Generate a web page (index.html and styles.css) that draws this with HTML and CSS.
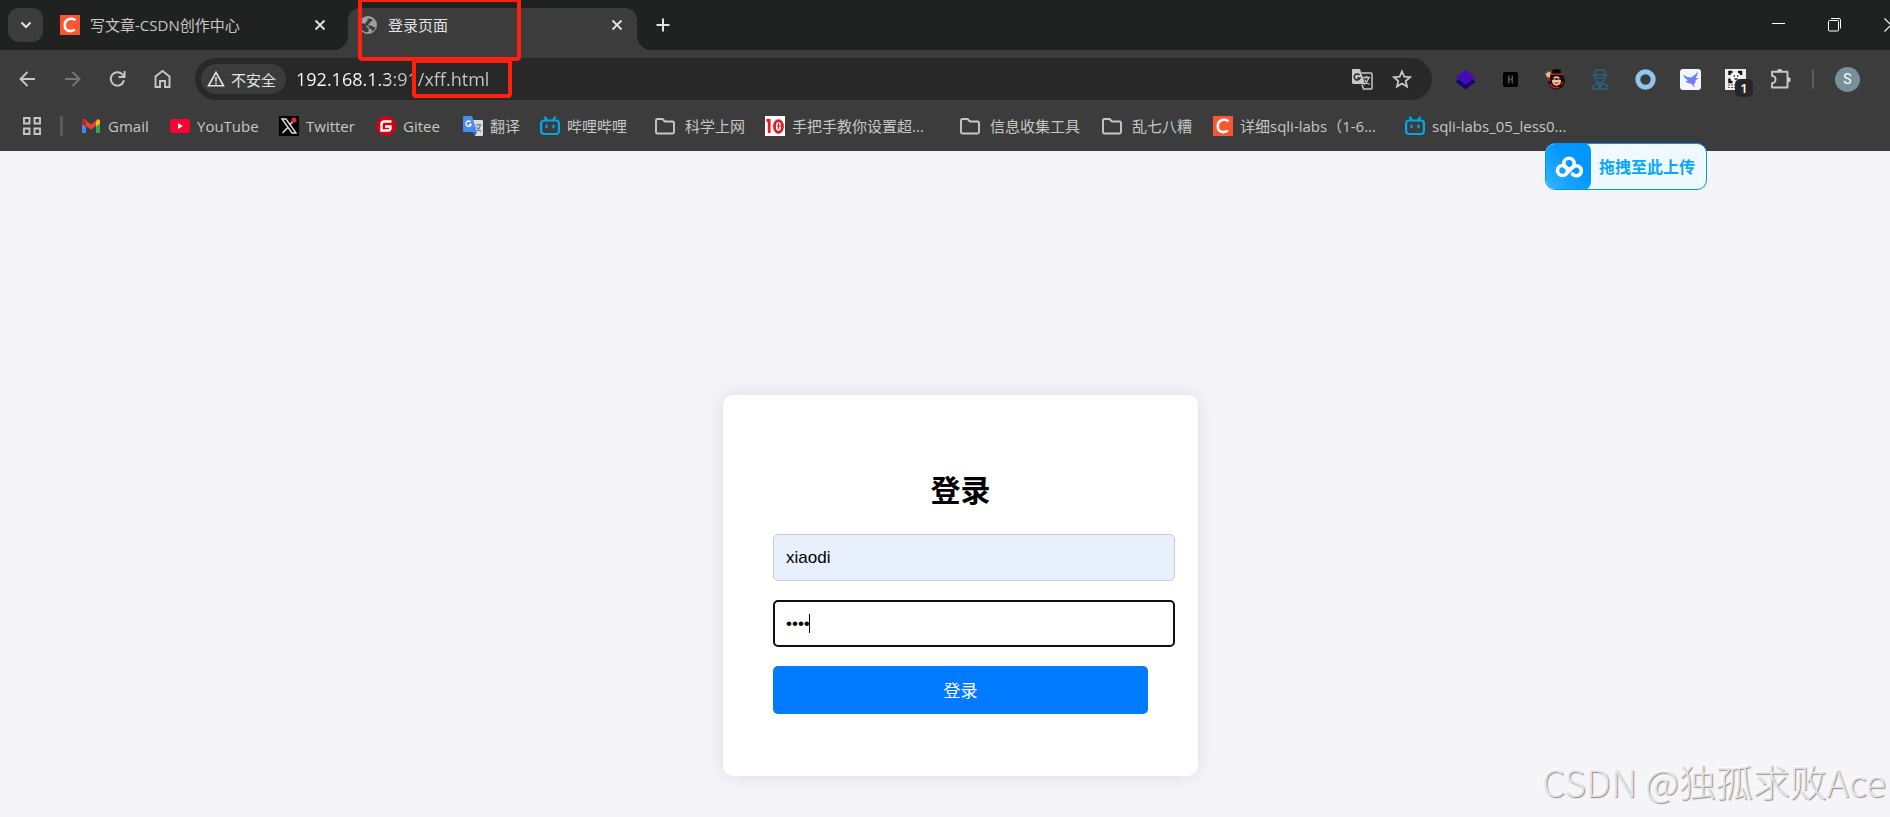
FILE: index.html
```
<!DOCTYPE html>
<html lang="zh-CN">
<head>
    <meta charset="UTF-8">
    <title>登录页面</title>
    <link rel="stylesheet" href="styles.css">
</head>
<body>
    <svg class="defs" width="0" height="0" aria-hidden="true">
        <symbol id="csdn" viewBox="0 0 20 20">
            <rect width="20" height="20" fill="#fc5531"/>
            <path d="M15.400 5.200C13.800 3.700 11.500 3.500 9.300 4 6.200 4.800 4.800 7.300 4.800 10.300c0 3.600 1.900 5.700 5.300 5.800 1.900 0 3.600-.5 4.800-1.500" fill="none" stroke="#fff" stroke-width="2.600"/>
        </symbol>
        <symbol id="bili" viewBox="0 0 20 20">
            <g fill="none" stroke="#00a8e8" stroke-width="2.200" stroke-linecap="round">
                <rect x="1.100" y="4.500" width="17.800" height="13.500" rx="3"/>
                <path d="M5 1.300l2 3M15 1.300l-2 3M6.500 9.700v1.600M13.500 9.700v1.600"/>
            </g>
        </symbol>
        <symbol id="folder" viewBox="0 0 20 20">
            <path d="M1 4.500c0-1 .6-1.500 1.500-1.500h5l2.500 2.500h7.500c1 0 1.500.6 1.500 1.500v9c0 1-.6 1.500-1.500 1.500h-15C1.600 17.500 1 17 1 16z" fill="none" stroke="#c7c7c7" stroke-width="1.900"/>
        </symbol>
        <symbol id="cross" viewBox="0 0 12 12">
            <path d="M1.500 1.500l9 9M10.500 1.500l-9 9" stroke="#e3e3e3" stroke-width="1.800"/>
        </symbol>
    </svg>

    <header class="browser">
        <div class="tabstrip">
            <button class="tab-search" aria-label="搜索标签页">
                <svg width="12" height="12" viewBox="0 0 12 12"><path d="M1.500 3.500L6 8l4.500-4.500" fill="none" stroke="#e3e3e3" stroke-width="2"/></svg>
            </button>
            <div class="tab">
                <svg width="20" height="20"><use href="#csdn"/></svg>
                <span class="tab-title">写文章-CSDN创作中心</span>
                <button class="tab-close" aria-label="关闭"><svg width="12" height="12"><use href="#cross"/></svg></button>
            </div>
            <div class="tab active">
                <svg width="20" height="20" viewBox="0 0 20 20">
                    <circle cx="10" cy="10" r="9" fill="#9aa0a6"/>
                    <path d="M2.500 8.500h4l2 1.800v2l2 1v3.700c-4 .8-7.700-2-8.200-6zM10 3.500l3.500.5 1.500 1.500-2.500 1-.5 1.800-2 .7 1 1.500 3 .2 1.500 1.500 1.800-.3c-.5 2.500-1.800 3.800-3.300 4.600l-.5-2.500-2.500-.8-.5-2.200-2.200-.5-1-2.500 1.700-1.500z" fill="#3c3c3c"/>
                </svg>
                <span class="tab-title">登录页面</span>
                <button class="tab-close" aria-label="关闭"><svg width="12" height="12"><use href="#cross"/></svg></button>
            </div>
            <button class="new-tab" aria-label="新标签页">
                <svg width="14" height="14" viewBox="0 0 14 14"><path d="M7 .5v13M.5 7h13" stroke="#e3e3e3" stroke-width="2"/></svg>
            </button>
            <div class="window-controls">
                <button aria-label="最小化"><svg width="14" height="14" viewBox="0 0 14 14"><path d="M0 5.500h13" stroke="#fff"/></svg></button>
                <button aria-label="还原"><svg width="14" height="14" viewBox="0 0 14 14"><g fill="none" stroke="#fff"><rect x=".5" y="2.500" width="10" height="10.500" rx="1"/><path d="M3 .5h8q1.500 0 1.500 1.500v8.500"/></g></svg></button>
                <button aria-label="关闭窗口"><svg width="14" height="14" viewBox="0 0 14 14"><path d="M.5.5l13 13M13.500.5l-13 13" stroke="#fff" stroke-width="1.200"/></svg></button>
            </div>
        </div>

        <div class="toolbar">
            <div class="nav">
                <button aria-label="后退"><svg width="21" height="20" viewBox="0 0 21 20"><path d="M18 10H3.500M10.500 3L3.500 10l7 7" fill="none" stroke="#c7c7c7" stroke-width="1.900"/></svg></button>
                <button aria-label="前进"><svg width="21" height="20" viewBox="0 0 21 20"><path d="M3 10h14.500M10.500 3l7 7-7 7" fill="none" stroke="#757575" stroke-width="1.900"/></svg></button>
                <button aria-label="刷新"><svg width="21" height="20" viewBox="0 0 21 20"><path d="M17 11.200a6.700 6.700 0 1 1-1.800-6L17.500 7.500M17.600 2v6h-6" fill="none" stroke="#c7c7c7" stroke-width="1.900"/></svg></button>
                <button aria-label="主页"><svg width="21" height="20" viewBox="0 0 21 20"><path d="M3.500 18V7.500l7-5.500 7 5.500V18H13v-6H8v6z" fill="none" stroke="#c7c7c7" stroke-width="1.900"/></svg></button>
            </div>
            <div class="omnibox">
                <button class="site-chip">
                    <svg width="18" height="18" viewBox="0 0 18 18"><path d="M9 2.500L1.500 15.800h15z" fill="none" stroke="#e3e3e3" stroke-width="1.600"/><path d="M9 7v4.500M9 12.500v1.700" stroke="#e3e3e3" stroke-width="1.600"/></svg>
                    <span>不安全</span>
                </button>
                <input class="url" type="text" aria-label="地址" value="192.168.1.3:91/xff.html">
                <div class="omnibox-actions">
                    <button aria-label="翻译此页">
                        <svg width="22" height="22" viewBox="0 0 22 22">
                            <path d="M2 1h7l5 15H2.500Q1 16 1 14.500V2Q1 1 2 1z" fill="#c7c7c7"/>
                            <path d="M10.500 5H20q1 0 1 1v14q0 1-1 1h-7.500L11 16.500" fill="none" stroke="#c7c7c7" stroke-width="1.500"/>
                            <path d="M8.500 7A3 3 0 1 0 9 10H6.200" fill="none" stroke="#282828" stroke-width="1.500"/>
                            <path d="M12 9.500h7M15.500 7.700v1.800M18 9.500q-1.500 4.500-5 7M13.500 11.500q1.500 3.500 5 5" fill="none" stroke="#c7c7c7" stroke-width="1.300"/>
                        </svg>
                    </button>
                    <button aria-label="收藏">
                        <svg width="20" height="20" viewBox="0 0 20 20"><path d="M10 2.500l2.300 5.200 5.700.5-4.300 3.800 1.300 5.600-5-3-5 3L6.300 12 2 8.200l5.700-.5z" fill="none" stroke="#c7c7c7" stroke-width="1.800"/></svg>
                    </button>
                </div>
            </div>
            <div class="extensions">
                <button aria-label="图层"><svg width="21" height="21" viewBox="0 0 21 21"><path d="M.5 12.500L4 10h13l3.500 2.500-10 8z" fill="#1b0075"/><path d="M10.500.5l10 8-10 7-10-7z" fill="#4609b5"/></svg></button>
                <button aria-label="HackBar"><svg width="21" height="21" viewBox="0 0 21 21"><rect x="3" y="3" width="15" height="15" rx="2" fill="#000"/><path d="M8.700 6.500v8M12.300 6.500v8M8.700 10.500h3.600" stroke="#555" stroke-width="1.500"/></svg></button>
                <button aria-label="用户代理">
                    <svg width="21" height="21" viewBox="0 0 21 21">
                        <circle cx="11.500" cy="12" r="8.500" fill="#170d0c"/>
                        <path d="M0 4l2 .5L2.500 2l1.500 1.500L5.500 2 6 6 4.500 9 2 8z" fill="#e9b872"/>
                        <path d="M3 9l2 3" stroke="#d31c25" stroke-width="2"/>
                        <path d="M7 5l.5-4.500q4-1 8 0L16 5z" fill="#080808"/>
                        <path d="M5.500 4.500h12v1.500h-12z" fill="#d31c25"/>
                        <path d="M5 6h13v1.500H5z" fill="#080808"/>
                        <ellipse cx="11.500" cy="12" rx="4.500" ry="4.700" fill="#f0c49a"/>
                        <path d="M7 9h9v2H7z" fill="#3a1712"/>
                        <path d="M8.500 10h2M12.500 10h2" stroke="#f5d8b8"/>
                        <path d="M9.500 14h4" stroke="#5c241b"/>
                        <path d="M5 15l2 2.500 2.500 1M16 15.500l2-2M9 18.500h5" fill="none" stroke="#d31c25" stroke-width="1.500"/>
                    </svg>
                </button>
                <button aria-label="侦探">
                    <svg width="21" height="21" viewBox="0 0 21 21" fill="none" stroke="#28617f" stroke-width="1.500">
                        <path d="M5 5V3q0-2 2-2h6q2 0 2 2v2M2.500 6h15M5 7v2q1 4.500 5 4.500T15 9V7M5 9h10M8 13v2l2 1.500 2-1.500v-2M3 20v-2q0-2 2-2.500l3-1 2 5.500 2-5.500 3 1q2.500.5 2.500 2.500v2zM10 16.500V20"/>
                    </svg>
                </button>
                <button aria-label="圆环"><svg width="21" height="21" viewBox="0 0 21 21"><circle cx="10.500" cy="10.500" r="7.700" fill="none" stroke="#8fc7f0" stroke-width="5"/></svg></button>
                <button aria-label="蜂鸟">
                    <svg width="21" height="21" viewBox="0 0 21 21">
                        <defs><linearGradient id="bird" x1="0" y1="0" x2="1" y2="1"><stop offset="0" stop-color="#32a2f5"/><stop offset="1" stop-color="#a65cf4"/></linearGradient></defs>
                        <rect width="21" height="21" rx="3" fill="#f2f5fd"/>
                        <path d="M3 5.500Q6 8 11 8.500 14.500 7 18 2.500q-.3 4-2.500 6.500l3.500.3-3.200 1.700q0 3.500-2.300 4.500l1.500 3q-2.500-1.500-4-4-4 0-5.500-2.500l3-.5Q5 10.500 3 5.500z" fill="url(#bird)"/>
                    </svg>
                </button>
                <button class="ext-badged" aria-label="脚本">
                    <svg width="21" height="21" viewBox="0 0 21 21">
                        <path d="M0 0h21v21H0z" fill="#eee"/>
                        <path d="M4.500 6V3h3M13 3h3v3M4.500 9.500v3.500h3" fill="none" stroke="#151515" stroke-width="2.500"/>
                        <ellipse cx="10.500" cy="8" rx="5" ry="4.300" fill="#fff"/>
                        <path d="M8.500 7h1.500M12 7h1.500M9.500 10h3" stroke="#222" stroke-width="1.300"/>
                        <path d="M3 16h9M3 18.500h8" stroke="#555" stroke-dasharray="2 1"/>
                    </svg>
                    <span class="ext-count">1</span>
                </button>
                <button aria-label="扩展程序"><svg width="21" height="21" viewBox="0 0 21 21"><path d="M2 2.700h15.500V18.500H2v-4.300q3.500-.2 3.500-3.700T2 6.700z" fill="none" stroke="#c7c7c7" stroke-width="1.900" stroke-linejoin="round"/><path d="M7 2.500a2.700 2.700 0 0 1 5.400 0zM18 8a2.700 2.700 0 0 1 0 5.400z" fill="#c7c7c7"/></svg></button>
            </div>
            <span class="divider"></span>
            <button class="avatar" aria-label="个人资料">S</button>
        </div>

        <nav class="bookmarks">
            <button class="apps" aria-label="应用"><svg width="20" height="20" viewBox="0 0 20 20"><path d="M2 2h5.500v5.500H2zM12.500 2H18v5.500h-5.500zM2 12.500h5.500V18H2zM12.500 12.500H18V18h-5.500z" fill="none" stroke="#c7c7c7" stroke-width="1.900"/></svg></button>
            <span class="divider"></span>
            <div class="bookmark-list">
                <a href="#">
                    <svg width="20" height="20" viewBox="0 0 20 20"><path d="M1 6v11h4V8z" fill="#4285f4"/><path d="M15 8v9h4V6z" fill="#34a853"/><path d="M1 5q0-2 2-2l7 5.500L17 3v5.500L10 13.500 3 8.500 1 7z" fill="#ea4335"/><path d="M1 5v3l4 3V5.500L3 4Q1 3.500 1 5z" fill="#c5221f"/><path d="M15 5.500v5l4-3V5q-.5-2.500-2.500-1.500z" fill="#fbbc04"/></svg>
                    <span>Gmail</span>
                </a>
                <a href="#">
                    <svg width="20" height="20" viewBox="0 0 20 20"><rect y="3" width="20" height="14" rx="3" fill="#ff0033"/><path d="M8 7l5 3-5 3z" fill="#fff"/></svg>
                    <span>YouTube</span>
                </a>
                <a href="#">
                    <svg width="20" height="20" viewBox="0 0 20 20"><path d="M0 0h20v20H0z" fill="#000"/><path d="M3 3h4l10 14h-4z" fill="none" stroke="#ddd" stroke-width="1.400"/><path d="M16 3l-5.300 6M8.800 11.500L3.500 17" stroke="#ddd" stroke-width="1.500"/><circle cx="15" cy="4" r="2.600" fill="#f4212e"/></svg>
                    <span>Twitter</span>
                </a>
                <a href="#">
                    <svg width="20" height="20" viewBox="0 0 20 20"><circle cx="10" cy="10" r="10" fill="#d8000f"/><path d="M15.500 5.500H8.500q-3 0-3 3v6h6.500q2.500 0 2.500-2.500v-1.500H9" fill="none" stroke="#fff" stroke-width="2.400"/></svg>
                    <span>Gitee</span>
                </a>
                <a href="#">
                    <svg width="20" height="20" viewBox="0 0 20 20"><path d="M9 4h10q1 0 1 1v14q0 1-1 1h-7z" fill="#ddd"/><path d="M1 0h8l5 16H1q-1 0-1-1V1q0-1 1-1z" fill="#4a8af4"/><path d="M9.500 16H14l-2 4z" fill="#3367d6"/><path d="M7.800 6A2.700 2.700 0 1 0 8.300 8.500H5.800" fill="none" stroke="#fff" stroke-width="1.300"/><path d="M12.500 9h6M15.500 7.500V9M17.500 9q-1 3.500-3.500 5.500M13.500 11q1.500 3 4.500 4.500" fill="none" stroke="#607d8b" stroke-width="1.100"/></svg>
                    <span>翻译</span>
                </a>
                <a href="#"><svg width="20" height="20"><use href="#bili"/></svg><span>哔哩哔哩</span></a>
                <a href="#" class="dir"><svg width="20" height="20"><use href="#folder"/></svg><span>科学上网</span></a>
                <a href="#">
                    <svg width="20" height="20" viewBox="0 0 20 20"><path d="M0 0h20v20H0z" fill="#fff"/><path d="M1.500 4.500h2.700V17" fill="none" stroke="#f01820" stroke-width="2.800"/><ellipse cx="13.500" cy="10.500" rx="4" ry="5.800" fill="none" stroke="#f01820" stroke-width="2.800"/><path d="M13.500 7v6M12 10h4" stroke="#f01820" stroke-width="1.200"/></svg>
                    <span>手把手教你设置超...</span>
                </a>
                <a href="#" class="dir"><svg width="20" height="20"><use href="#folder"/></svg><span>信息收集工具</span></a>
                <a href="#" class="dir"><svg width="20" height="20"><use href="#folder"/></svg><span>乱七八糟</span></a>
                <a href="#"><svg width="20" height="20"><use href="#csdn"/></svg><span>详细sqli-labs（1-6...</span></a>
                <a href="#"><svg width="20" height="20"><use href="#bili"/></svg><span>sqli-labs_05_less0...</span></a>
            </div>
        </nav>
    </header>

    <main>
        <div class="login-container">
            <h2>登录</h2>
            <form>
                <input type="text" class="username" aria-label="用户名" value="xiaodi">
                <div class="password-field">
                    <input type="password" class="password" aria-label="密码" value="1234">
                    <span class="caret"></span>
                </div>
                <button type="button" class="submit">登录</button>
            </form>
        </div>
    </main>

    <div class="mark mark-tab"></div>
    <div class="mark mark-url"></div>

    <button class="upload">
        <span class="upload-icon">
            <svg width="28" height="22" viewBox="0 0 28 22" fill="none" stroke="#fff" stroke-width="3.600" stroke-linecap="round">
                <circle cx="14" cy="7.500" r="5.200"/>
                <circle cx="7.500" cy="14.500" r="5"/>
                <path d="M11.500 17.500l6-6a5 5 0 1 1 0 6.500"/>
            </svg>
        </span>
        <span class="upload-text">拖拽至此上传</span>
    </button>

    <div class="watermark">CSDN @独孤求败Ace</div>
</body>
</html>
```

FILE: styles.css
```
* {
    box-sizing: border-box;
}
body {
    margin: 0;
    min-height: 100vh;
    position: relative;
    overflow: hidden;
    background: #f4f4f9;
    font-family: "Open Sans", "Noto Sans CJK SC", sans-serif;
}
button {
    padding: 0;
    border: none;
    background: none;
    color: inherit;
    font-family: inherit;
}
svg {
    display: block;
    flex: none;
}
.defs {
    position: absolute;
}

/* browser frame */
.browser {
    background: #3c3c3c;
    color: #c7c7c7;
    overflow: hidden;
}
.tabstrip {
    display: flex;
    height: 50px;
    padding-left: 8px;
    background: #202221;
}
.tab-search {
    display: flex;
    align-items: center;
    justify-content: center;
    width: 35px;
    height: 34px;
    margin-top: 8px;
    border-radius: 11px;
    background: #3c3c3c;
}
.tab {
    display: flex;
    align-items: center;
    width: 289px;
    height: 42px;
    margin-top: 8px;
    padding: 0 14px 8px 10px;
    font-size: 15px;
    line-height: 20px;
}
.tab:not(.active) {
    width: 299px;
    margin-left: 6px;
    padding-left: 11px;
    padding-right: 22px;
}
.tab-title {
    flex: 1;
    margin-left: 10px;
    white-space: nowrap;
}
.active {
    position: relative;
    border-radius: 12px 12px 0 0;
    background: #3c3c3c;
    color: #e3e3e3;
}
.active::before,
.active::after {
    content: "";
    position: absolute;
    bottom: 0;
    width: 14px;
    height: 14px;
}
.active::before {
    right: 100%;
    background: radial-gradient(circle at 0 0, transparent 14px, #3c3c3c 14px);
}
.active::after {
    left: 100%;
    background: radial-gradient(circle at 100% 0, transparent 14px, #3c3c3c 14px);
}
.new-tab {
    width: 14px;
    margin-left: 19px;
}
.window-controls {
    display: flex;
    gap: 42px;
    margin-left: auto;
    margin-right: -8px;
}

.toolbar {
    display: flex;
    align-items: center;
    height: 58px;
    padding: 0 30px 0 17px;
}
.nav {
    display: flex;
    gap: 24px;
}
.omnibox {
    display: flex;
    flex: 1;
    align-items: center;
    height: 42px;
    margin-left: 22px;
    padding: 0 20px 0 6px;
    border-radius: 21px;
    background: #282828;
}
.site-chip {
    display: flex;
    align-items: center;
    gap: 6px;
    height: 30px;
    padding: 0 10px 0 6px;
    border-radius: 15px;
    background: #3c3c3c;
    color: #e3e3e3;
    font-size: 15px;
}
.url {
    flex: 1;
    margin-left: 10px;
    padding: 0;
    border: none;
    outline: none;
    /* host is brighter than the port and path */
    background: linear-gradient(90deg, #fff 93px, #c7c7c7 93px);
    -webkit-background-clip: text;
    background-clip: text;
    color: transparent;
    font-family: inherit;
    font-size: 18px;
    line-height: 26px;
}
.omnibox-actions {
    display: flex;
    align-items: center;
    gap: 19px;
}
.extensions {
    display: flex;
    gap: 24px;
    margin-left: 23px;
}
.ext-badged {
    position: relative;
}
.ext-count {
    position: absolute;
    left: 10px;
    top: 10px;
    width: 18px;
    border-radius: 5px;
    background: #262626;
    color: #fff;
    font-size: 13px;
    font-weight: 600;
    line-height: 18px;
}
.divider {
    width: 3px;
    height: 20px;
    border-radius: 1px;
    background: #5c5c5c;
}
.toolbar .divider {
    width: 2px;
    margin: 0 21px;
}
.avatar {
    width: 25px;
    height: 25px;
    border-radius: 50%;
    background: #78909c;
    color: #fff;
    font-family: Roboto, sans-serif;
    font-size: 14px;
}

.bookmarks {
    display: flex;
    align-items: center;
    height: 43px;
    padding: 0 22px 7px;
}
.apps {
    margin-right: 18px;
}
.bookmark-list {
    display: grid;
    grid-template-columns: 89px 109px 97px 87px 77px 115px 110px 195px 142px 111px 192px 170px;
    margin-left: 18px;
}
.bookmark-list a {
    display: flex;
    align-items: center;
    gap: 7px;
    color: #c7c7c7;
    font-size: 15px;
    line-height: 20px;
    text-decoration: none;
    white-space: nowrap;
}
.bookmark-list .dir {
    gap: 10px;
}

/* login page */
main {
    display: flex;
    justify-content: center;
    padding: 244px 0 42px 31px;
}
.login-container {
    width: 475px;
    padding: 73px 50px 62px;
    border-radius: 10px;
    background: #fff;
    box-shadow: 0 0 20px rgba(0, 0, 0, 0.1);
}
h2 {
    margin: 0 0 21px;
    color: #000;
    font-family: "Liberation Sans", "Noto Sans CJK SC", sans-serif;
    font-size: 30px;
    line-height: 45px;
    text-align: center;
}
form {
    display: flex;
    flex-direction: column;
    gap: 19px;
}
.username,
.password {
    display: block;
    width: calc(100% + 27px);
    height: 47px;
    padding: 0 12px;
    border: 1px solid #ccc;
    border-radius: 5px;
    background: #e8f0fe;
    color: #000;
    font-family: "Liberation Sans", Arial, sans-serif;
    font-size: 17px;
}
.password-field {
    position: relative;
}
.password {
    padding: 0 11px;
    border: 2px solid #101010;
    outline: none;
    background: #fff;
}
.caret {
    position: absolute;
    left: 36px;
    top: 14px;
    width: 1px;
    height: 19px;
    background: #000;
}
.submit {
    height: 48px;
    padding-bottom: 2px;
    border-radius: 5px;
    background: #007bff;
    color: #fff;
    font-size: 17px;
}

/* overlays */
.mark {
    position: absolute;
    border: 4px solid #ff2010;
    border-radius: 4px;
}
.mark-tab {
    left: 358px;
    top: -2px;
    width: 163px;
    height: 63px;
}
.mark-url {
    left: 412px;
    top: 59px;
    width: 100px;
    height: 39px;
}
.upload {
    display: flex;
    align-items: center;
    position: absolute;
    top: 143px;
    right: 183px;
    width: 162px;
    height: 47px;
    border: 1px solid #0095ff;
    border-radius: 10px;
    background: #f0f9ff;
    overflow: hidden;
}
.upload-icon {
    display: flex;
    align-items: center;
    justify-content: center;
    width: 45px;
    height: 47px;
    border-radius: 0 8px 8px 0;
    background: linear-gradient(45deg, #35b8ff, #0095ff 60%);
}
.upload-text {
    margin-left: 8px;
    padding-bottom: 2px;
    color: #06a7ff;
    font-size: 16px;
    font-weight: bold;
}
.watermark {
    position: absolute;
    right: 4px;
    bottom: 10px;
    color: #e6e6ea;
    font-family: "Noto Sans CJK SC", sans-serif;
    font-size: 37px;
    font-weight: 300;
    line-height: 54px;
    text-shadow: 1px 1px 1px #8c8c8c, -1px -1px 1px #fff;
    white-space: nowrap;
}
```
